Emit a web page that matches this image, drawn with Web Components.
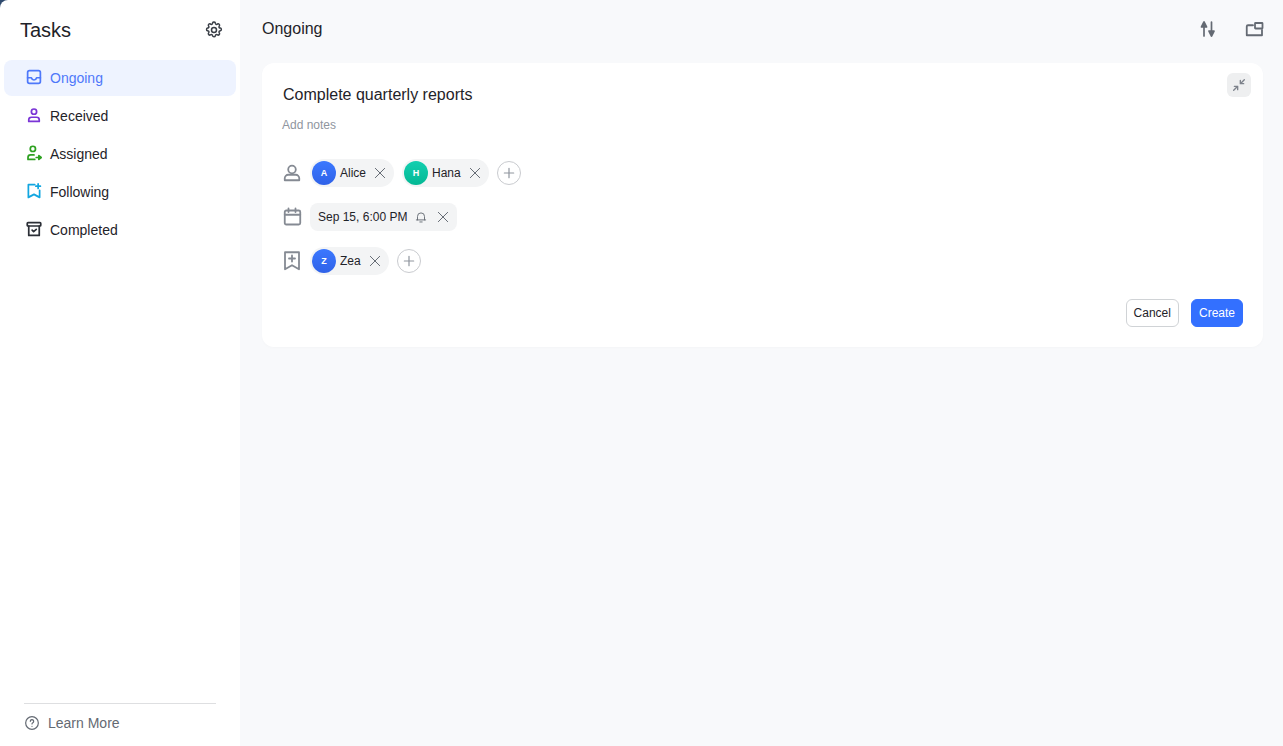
<!DOCTYPE html>
<html>
<head>
<meta charset="utf-8">
<title>Tasks</title>
<style>
  html, body { margin: 0; height: 100%; }
  body { font-family: "Liberation Sans", Arial, sans-serif; color: #1f2329; background: #f8f9fb; overflow: hidden; }
</style>
</head>
<body>
<task-app></task-app>

<script>
const ICONS = {
  gear: '<path d="M10.3 3.6c.4-1.5 2.9-1.5 3.3 0l.2.8c.2.7 1 1.1 1.7.8l.7-.4c1.4-.8 3.1.9 2.3 2.3l-.4.7c-.3.7 0 1.5.8 1.7l.8.2c1.5.4 1.5 2.9 0 3.3l-.8.2c-.7.2-1.1 1-.8 1.7l.4.7c.8 1.4-.9 3.1-2.3 2.3l-.7-.4c-.7-.3-1.5 0-1.7.8l-.2.8c-.4 1.5-2.9 1.5-3.3 0l-.2-.8c-.2-.7-1-1.1-1.7-.8l-.7.4c-1.4.8-3.1-.9-2.3-2.3l.4-.7c.3-.7 0-1.5-.8-1.7l-.8-.2c-1.5-.4-1.5-2.9 0-3.3l.8-.2c.7-.2 1.1-1 .8-1.7l-.4-.7c-.8-1.4.9-3.1 2.3-2.3l.7.4c.7.3 1.5 0 1.7-.8z"/><circle cx="12" cy="12" r="3"/>',
  inbox: '<rect x="3.5" y="3.5" width="17" height="17" rx="2.5"/><path d="M3.5 13h5c.6 2 2 3 3.5 3s2.900-1 3.500-3h5"/>',
  user: '<circle cx="12" cy="7.5" r="3.5"/><path d="M5 20.5v-2A3.500 3.500 0 0 1 8.500 15h7a3.500 3.500 0 0 1 3.500 3.500v2z"/>',
  assign: '<circle cx="10.5" cy="6.5" r="3.5"/><path d="M12 14.500H7.500A3.500 3.500 0 0 0 4 18v2.500h9"/><path d="M15 18h6"/><path d="M18.500 15.500 21.500 18l-3 2.500z" style="fill:currentColor"/>',
  follow: '<path d="M13 3.5H4.500v17l7.500-4 7.500 4V11"/><path d="M17.5 2.500v6M14.500 5.500h6"/>',
  archive: '<rect x="3" y="3.5" width="18" height="4.500" rx="1"/><path d="M5 8v12.500h14V8"/><path d="m9.500 13.500 2 2 3.500-3"/>',
  help: '<circle cx="12" cy="12" r="9.5"/><path d="M9.500 9.500a2.500 2.500 0 1 1 3.800 2.100c-.8.500-1.300 1-1.300 1.900"/><path d="M12 17v.01"/>',
  sort: '<path d="M8 6v12"/><path d="M8 4 5.500 9h5z" style="fill:currentColor"/><path d="M15.500 4v12"/><path d="M15.500 18 13 13h5z" style="fill:currentColor"/>',
  window: '<path d="M11 7.250H6a1.250 1.250 0 0 0-1.250 1.250v8.750H20V12"/><rect x="13" y="5" width="7.500" height="5.500" rx=".5"/>',
  collapse: '<path d="M4 20l6-6M5 14h5v5"/><path d="M20 4l-6 6M19 10h-5V5"/>',
  person: '<circle cx="12" cy="8.5" r="3.800"/><path d="M4.750 19.250v-2a3.500 3.500 0 0 1 3.500-3.500h7.500a3.500 3.500 0 0 1 3.500 3.500v2z"/>',
  calendar: '<rect x="4.750" y="5.500" width="15.500" height="14" rx="1.500"/><path d="M4.750 9.750h15.500M8.500 3.500V7M15.500 3.500V7"/>',
  bookmark: '<path d="M5 3.250h14v17l-7-4-7 4z"/><path d="M12 6.500v6M9 9.500h6"/>',
  bell: '<path d="M6 17V11a6 6 0 0 1 12 0v6M4 17h16M10 20.500h4"/>',
  close: '<path d="M4 4l16 16M20 4 4 20"/>',
  plus: '<path d="M12 5v14M5 12h14"/>'
};

class UiIcon extends HTMLElement {
  connectedCallback() {
    const size = this.getAttribute('size') || 20;
    const width = this.getAttribute('stroke') || 2;
    const shadow = this.attachShadow({mode: 'open'});
    shadow.innerHTML = `
      <style>
        :host { display: inline-flex; flex: none; width: ${size}px; height: ${size}px; color: inherit; }
        svg { display: block; width: 100%; height: 100%; fill: none; stroke: currentColor; stroke-width: ${width}; stroke-linecap: round; stroke-linejoin: round; }
      </style>
      <svg viewBox="0 0 24 24">${ICONS[this.getAttribute('name')]}</svg>`;
  }
}
customElements.define('ui-icon', UiIcon);

class NavItem extends HTMLElement {
  connectedCallback() {
    const shadow = this.attachShadow({mode: 'open'});
    shadow.innerHTML = `
      <style>
        :host { display: flex; align-items: center; gap: 7px; height: 36px; padding-left: 21px; margin-bottom: 2px; border-radius: 8px; font-size: 14px; color: #1f2329; }
        :host([active]) { background: #eef3ff; color: #4e78fa; }
        .ic { display: flex; margin-top: -2px; color: var(--ic, inherit); }
      </style>
      <span class="ic"><ui-icon name="${this.getAttribute('icon')}" size="18" stroke="2.300"></ui-icon></span>
      <slot></slot>`;
  }
}
customElements.define('nav-item', NavItem);

class SideBar extends HTMLElement {
  constructor() {
    super();
    this.attachShadow({mode: 'open'}).innerHTML = `
      <style>
        :host { display: flex; flex-direction: column; width: 240px; flex: none; height: 746px; box-sizing: border-box; background: #fff; padding: 0 4px; border-top-left-radius: 8px; }
        header { display: flex; align-items: center; justify-content: space-between; height: 60px; padding: 0 12px 0 16px; }
        h1 { margin: 0; font-size: 20px; font-weight: 400; color: #1f2329; }
        header ui-icon { color: #3a3f47; }
        nav { flex: 1; }
        footer { box-sizing: border-box; margin: 0 20px 5px; height: 38px; border-top: 1px solid #dedfe1; display: flex; align-items: center; gap: 8px; font-size: 14px; color: #646a73; }
      </style>
      <header><h1>Tasks</h1><ui-icon name="gear" size="20" stroke="1.800"></ui-icon></header>
      <nav>
        <nav-item icon="inbox" active>Ongoing</nav-item>
        <nav-item icon="user" style="--ic:#7b35d6">Received</nav-item>
        <nav-item icon="assign" style="--ic:#2ea121">Assigned</nav-item>
        <nav-item icon="follow" style="--ic:#12a6e0">Following</nav-item>
        <nav-item icon="archive" style="--ic:#2b2f36">Completed</nav-item>
      </nav>
      <footer><ui-icon name="help" size="16" stroke="1.800"></ui-icon><span>Learn More</span></footer>`;
  }
}
customElements.define('side-bar', SideBar);

class PersonChip extends HTMLElement {
  connectedCallback() {
    const shadow = this.attachShadow({mode: 'open'});
    const name = this.getAttribute('name');
    shadow.innerHTML = `
      <style>
        :host { display: inline-flex; align-items: center; height: 28px; border-radius: 14px; background: #f3f4f5; padding: 0 7px 0 2px; font-size: 12px; color: #1f2329; }
        .av { width: 24px; height: 24px; border-radius: 50%; background: linear-gradient(${this.getAttribute('color')}, ${this.getAttribute('shade')}); color: #fff; font-size: 9px; font-weight: 700; display: flex; align-items: center; justify-content: center; margin-right: 4px; }
        ui-icon { color: #646a73; margin-left: 7px; }
      </style>
      <span class="av">${name[0]}</span><span>${name}</span><ui-icon name="close" size="14" stroke="1.700"></ui-icon>`;
  }
}
customElements.define('person-chip', PersonChip);

class AddButton extends HTMLElement {
  constructor() {
    super();
    this.attachShadow({mode: 'open'}).innerHTML = `
      <style>
        :host { display: inline-flex; align-items: center; justify-content: center; width: 24px; height: 24px; box-sizing: border-box; border-radius: 50%; border: 1px solid #c9cbcf; color: #8f959e; }
      </style>
      <ui-icon name="plus" size="16" stroke="1.800"></ui-icon>`;
  }
}
customElements.define('add-button', AddButton);

class FieldRow extends HTMLElement {
  connectedCallback() {
    const shadow = this.attachShadow({mode: 'open'});
    shadow.innerHTML = `
      <style>
        :host { display: flex; align-items: center; height: 28px; margin-bottom: 16px; padding-left: 18px; }
        ui-icon { color: #858a93; margin-right: 6px; }
        .items { display: flex; align-items: center; gap: 8px; }
      </style>
      <ui-icon name="${this.getAttribute('icon')}" size="24" stroke="1.800"></ui-icon>
      <div class="items"><slot></slot></div>`;
  }
}
customElements.define('field-row', FieldRow);

class TaskCard extends HTMLElement {
  constructor() {
    super();
    this.attachShadow({mode: 'open'}).innerHTML = `
      <style>
        :host { display: block; position: relative; box-sizing: border-box; height: 284px; background: #fff; border-radius: 12px; box-shadow: 0 1px 3px rgba(0,0,0,.02); padding-top: 22px; }
        .title { margin: 0 0 0 21px; font-size: 16px; line-height: 20px; color: #1f2329; }
        .notes { margin: 12px 0 26px 20px; font-size: 12px; line-height: 16px; color: #8f959e; }
        .collapse { position: absolute; top: 10px; right: 12px; width: 24px; height: 24px; border-radius: 6px; background: #eeeff0; color: #7d828b; display: flex; align-items: center; justify-content: center; }
        .date { display: inline-flex; align-items: center; height: 28px; border-radius: 8px; background: #f3f4f5; padding: 0 7px 0 8px; font-size: 12px; color: #1f2329; }
        .date ui-icon { color: #646a73; }
        .actions { display: flex; justify-content: flex-end; gap: 12px; padding: 8px 20px 0 0; }
        button { font: inherit; font-size: 12px; height: 28px; border-radius: 6px; box-sizing: border-box; padding: 0 7px; border: 1px solid #d0d3d6; background: #fff; color: #1f2329; }
        button.primary { background: #3370ff; border-color: #3370ff; color: #fff; }
      </style>
      <p class="title">Complete quarterly reports</p>
      <p class="notes">Add notes</p>
      <div class="collapse"><ui-icon name="collapse" size="16" stroke="2"></ui-icon></div>
      <field-row icon="person">
        <person-chip name="Alice" color="#3b78ff" shade="#2f62e8"></person-chip>
        <person-chip name="Hana" color="#13cfb0" shade="#04b894"></person-chip>
        <add-button></add-button>
      </field-row>
      <field-row icon="calendar">
        <span class="date">Sep 15, 6:00 PM<ui-icon name="bell" size="14" stroke="1.600" style="margin:0 8px 0 6.5px"></ui-icon><ui-icon name="close" size="14" stroke="1.700"></ui-icon></span>
      </field-row>
      <field-row icon="bookmark">
        <person-chip name="Zea" color="#3b78ff" shade="#2f62e8"></person-chip>
        <add-button></add-button>
      </field-row>
      <div class="actions"><button>Cancel</button><button class="primary">Create</button></div>`;
  }
}
customElements.define('task-card', TaskCard);

class TaskApp extends HTMLElement {
  constructor() {
    super();
    this.attachShadow({mode: 'open'}).innerHTML = `
      <style>
        :host { display: flex; width: 100%; height: 100vh; background: linear-gradient(135deg, #2f4a6e 6px, #f8f9fb 6px); }
        main { flex: 1; min-width: 0; padding: 0 20px 0 22px; background: #f8f9fb; }
        .top { display: flex; align-items: center; justify-content: space-between; height: 63px; box-sizing: border-box; font-size: 16px; color: #1f2329; }
        .top span { margin-top: -6px; }
        .tools { display: flex; gap: 22px; margin-top: -3px; margin-right: -3px; color: #646a73; }
      </style>
      <side-bar></side-bar>
      <main>
        <div class="top"><span>Ongoing</span><div class="tools"><ui-icon name="sort" size="24" stroke="1.700"></ui-icon><ui-icon name="window" size="24" stroke="1.800"></ui-icon></div></div>
        <task-card></task-card>
      </main>`;
  }
}
customElements.define('task-app', TaskApp);
</script>
</body>
</html>
